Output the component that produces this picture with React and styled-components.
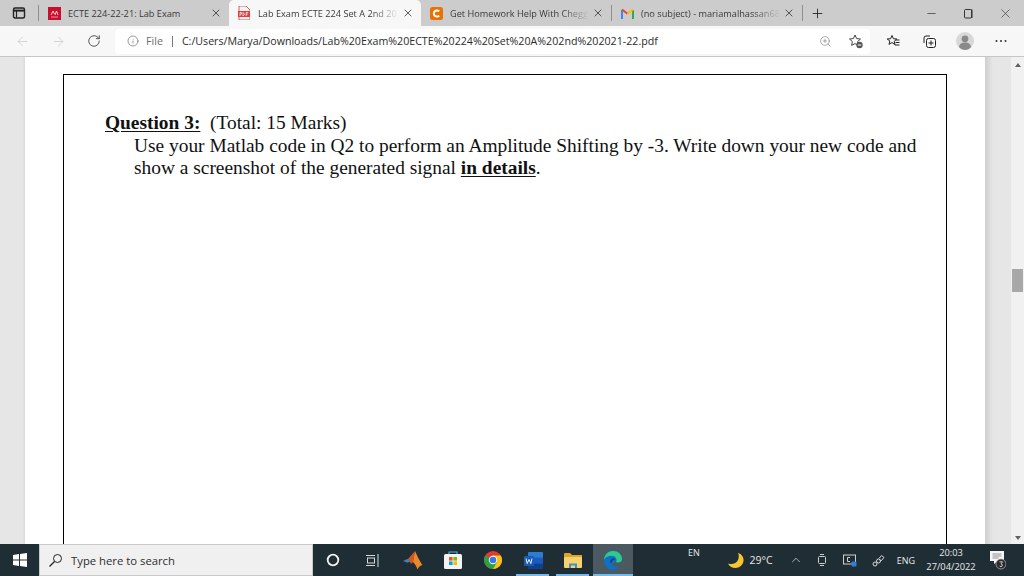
import styled, { createGlobalStyle } from "styled-components";
import { X, Plus, Minus, RotateCw, ArrowLeft, ArrowRight, Info, ZoomIn, ChevronUp } from "lucide-react";

const Global = createGlobalStyle`
  html, body { margin: 0; padding: 0; overflow: hidden; background: #e6e6e6; }
  * { box-sizing: border-box; }
`;

const Screen = styled.div`
  width: 1024px;
  height: 576px;
  display: flex;
  flex-direction: column;
  overflow: hidden;
  font-family: "Open Sans", "Noto Sans", sans-serif;
`;

const TabStrip = styled.div`
  height: 26px;
  background: #cccccc;
  display: flex;
  align-items: stretch;
  flex: none;
`;

const WindowMenu = styled.div`
  width: 38px;
  display: flex;
  align-items: center;
  justify-content: center;
`;

const TabDivider = styled.div`
  width: 1px;
  flex: none;
  margin: 5px 0;
  background: #8f8f8f;
`;

const Tab = styled.div`
  width: ${({ $w }) => $w}px;
  display: flex;
  align-items: center;
  padding: 0 4px 0 8px;
  background: ${({ $active }) => ($active ? "#f7f7f7" : "transparent")};
  border-radius: ${({ $active }) => ($active ? "5px 5px 0 0" : "0")};
`;

const TabIcon = styled.div`
  width: 14px;
  height: 14px;
  flex: none;
  display: flex;
  align-items: center;
  justify-content: center;
`;

const TabTitle = styled.div`
  flex: 1;
  min-width: 0;
  margin-left: 7px;
  font-size: 9.2px;
  color: #3a3a3a;
  white-space: nowrap;
  mask-image: ${({ $fade }) => ($fade ? "linear-gradient(90deg, #000 80%, transparent 100%)" : "none")};
`;

const TabClose = styled.div`
  width: 18px;
  flex: none;
  display: flex;
  justify-content: center;
  color: #333;
`;

const NewTab = styled.div`
  width: 30px;
  border-left: 1px solid #8f8f8f;
  margin: 5px 0;
  display: flex;
  align-items: center;
  justify-content: center;
  color: #222;
`;

const WindowControls = styled.div`
  margin-left: auto;
  display: flex;
  color: #333;
`;

const WindowButton = styled.div`
  width: 37px;
  display: flex;
  align-items: center;
  justify-content: center;
`;

const Toolbar = styled.div`
  height: 31px;
  flex: none;
  background: #f7f7f7;
  border-bottom: 1px solid #c6c6c6;
  display: flex;
  align-items: center;
`;

const NavButton = styled.div`
  width: 36px;
  display: flex;
  justify-content: center;
  color: ${({ $off }) => ($off ? "#c9c9c9" : "#333")};
`;

const NavGroup = styled.div`
  display: flex;
  width: 115px;
  padding-left: 4px;
`;

const Address = styled.div`
  width: 755px;
  height: 25px;
  background: #fff;
  border-radius: 4px;
  display: flex;
  align-items: center;
  padding-left: 12px;
  font-size: 10.67px;
  color: #2b2b2b;
`;

const Scheme = styled.span`
  color: #6d6d6d;
  margin-left: 7px;
`;

const AddressBar = styled.span`
  width: 1px;
  height: 11px;
  background: #777;
  margin: 0 9px;
`;

const AddressEnd = styled.div`
  margin-left: auto;
  display: flex;
  align-items: center;
  gap: 16px;
  padding-right: 6px;
  color: #666;
`;

const ToolGroup = styled.div`
  flex: 1;
  display: flex;
  padding-left: 5px;
`;

const ToolButton = styled.div`
  width: 36px;
  display: flex;
  justify-content: center;
  align-items: center;
  height: 24px;
`;

const Viewer = styled.div`
  flex: 1;
  min-height: 0;
  display: flex;
  background: #e6e6e6;
`;

const Gutter = styled.div`
  width: ${({ $w }) => $w}px;
  flex: none;
  background: ${({ $left }) =>
    $left
      ? "linear-gradient(90deg, #e6e6e6 88%, #dcdcdc 100%)"
      : "linear-gradient(90deg, #cfcfcf 0, #dcdcdc 18%, #e6e6e6 30%)"};
`;

const Sheet = styled.div`
  width: 960px;
  flex: none;
  background: #fff;
  padding: 17px 38px 0;
  overflow: hidden;
`;

const Frame = styled.div`
  width: 884px;
  height: 600px;
  border: 1px solid #000;
  padding-top: 37px;
  padding-left: 41px;
  font-family: "Liberation Serif", "Times New Roman", serif;
  font-size: 19.4px;
  line-height: 22.5px;
  color: #111;
`;

const Heading = styled.div`
  white-space: pre;
`;

const HeadingLabel = styled.strong`
  font-weight: 700;
  text-decoration: underline;
  text-underline-offset: 2px;
`;

const Body = styled.div`
  padding-left: 29px;
  white-space: nowrap;
`;

const Stress = styled.strong`
  font-weight: 700;
  text-decoration: underline;
  text-underline-offset: 2px;
`;

const Scrollbar = styled.div`
  width: 13px;
  flex: none;
  background: #f1f1f1;
  display: flex;
  flex-direction: column;
  align-items: center;
  justify-content: space-between;
  padding: 6px 0 4px;
`;

const ScrollArrow = styled.div`
  width: 0;
  height: 0;
  border-left: 3.5px solid transparent;
  border-right: 3.5px solid transparent;
  border-bottom: ${({ $down }) => ($down ? "0" : "4px solid #606060")};
  border-top: ${({ $down }) => ($down ? "4px solid #606060" : "0")};
`;

const ScrollThumb = styled.div`
  width: 11px;
  height: 23px;
  background: #a8a8a8;
  margin-bottom: 42px;
`;

const Taskbar = styled.div`
  height: 32px;
  flex: none;
  background: #1f2e35;
  display: flex;
  align-items: stretch;
`;

const StartButton = styled.div`
  width: 39px;
  display: flex;
  align-items: center;
  justify-content: center;
`;

const SearchBox = styled.div`
  width: 274px;
  background: #f0f0f0;
  border: 1px solid #c9c9c9;
  display: flex;
  align-items: center;
  padding-left: 8px;
  gap: 8px;
  font-size: 11.3px;
  color: #2e2e2e;
`;

const TaskSlot = styled.div`
  position: relative;
  width: 40px;
  display: flex;
  align-items: center;
  justify-content: center;
  background: ${({ $focus }) => ($focus ? "#4a5a60" : "transparent")};

  &::after {
    content: "";
    display: ${({ $open }) => ($open ? "block" : "none")};
    position: absolute;
    bottom: 0;
    height: 2px;
    left: ${({ $focus }) => ($focus ? "0" : "3px")};
    right: ${({ $focus }) => ($focus ? "0" : "4px")};
    background: #76b9ed;
  }
`;

const Tray = styled.div`
  margin-left: auto;
  display: flex;
  align-items: center;
  color: #e8e8e8;
`;

const TraySlot = styled.div`
  width: ${({ $w }) => $w}px;
  margin-left: ${({ $ml }) => $ml || 0}px;
  display: flex;
  align-items: center;
  justify-content: center;
  font-size: ${({ $size }) => $size || 10}px;
  white-space: nowrap;
`;

const LangHint = styled(TraySlot)`
  align-self: flex-start;
  margin-top: 2px;
  font-size: 9px;
`;

const Clock = styled.div`
  width: 54px;
  margin-left: 7px;
  display: flex;
  flex-direction: column;
  align-items: center;
  font-size: 9.3px;
  line-height: 14.5px;
  color: #e8e8e8;
`;

const Notify = styled.div`
  width: 46px;
  display: flex;
  justify-content: flex-start;
  padding-left: 12px;
`;

const WindowMenuIcon = () => (
  <svg width="14" height="14" viewBox="0 0 14 14" fill="none">
    <rect x="1.500" y="2" width="11" height="10" rx="1.500" stroke="#222" strokeWidth="1.400" />
    <path d="M1.500 4.600h11" stroke="#222" strokeWidth="2" />
    <path d="M4.500 4.600v7" stroke="#222" strokeWidth="1.200" />
  </svg>
);

const AcademicIcon = () => (
  <svg width="13" height="13" viewBox="0 0 13 13">
    <rect width="13" height="13" fill="#c8102e" />
    <path d="M3 8l2-4 1.500 3M7 8l1.500-4L10 8" stroke="#fff" strokeWidth=".8" fill="none" />
    <path d="M3 10h7" stroke="#f3b6bf" strokeWidth=".8" />
  </svg>
);

const PdfIcon = () => (
  <svg width="12" height="14" viewBox="0 0 12 14">
    <path d="M1 0h7l4 4v10H1z" fill="#f4f4f4" stroke="#d9383a" strokeWidth=".8" />
    <rect x="0" y="5" width="12" height="6" fill="#e2403f" />
    <path d="M2 10V6.500h1.400v1.600H2M5 10V6.500l1.600 1.700L5 10M8.200 10V6.500h2M8.200 8h1.600" stroke="#fff" strokeWidth=".7" fill="none" />
  </svg>
);

const CheggIcon = () => (
  <svg width="13" height="13" viewBox="0 0 13 13" fill="none">
    <rect width="13" height="13" rx="2.500" fill="#eb7100" />
    <path d="M9.200 4.400a3.100 3.100 0 1 0 0 4.200" stroke="#fff" strokeWidth="2" />
  </svg>
);

const GmailIcon = () => (
  <svg width="13" height="11" viewBox="0 0 13 11" fill="none">
    <path d="M1 11V2" stroke="#4285f4" strokeWidth="2" />
    <path d="M12 11V2" stroke="#34a853" strokeWidth="2" />
    <path d="M1 1.500l5.500 4.300" stroke="#ea4335" strokeWidth="2" />
    <path d="M12 1.500L6.500 5.800" stroke="#fbbc04" strokeWidth="2" />
  </svg>
);

const RestoreIcon = () => (
  <svg width="11" height="11" viewBox="0 0 11 11" fill="none">
    <rect x="1.500" y="1.500" width="7" height="8.500" rx="1" stroke="#333" />
    <path d="M8 1.500h1.500V10H8z" fill="#333" />
  </svg>
);

const FavAddIcon = () => (
  <svg width="16" height="16" viewBox="0 0 16 16" fill="none">
    <path d="M7 2l1.600 3.600 3.900.4-2.900 2.600.8 3.800L7 10.600l-3.400 1.800.8-3.800L1.500 6l3.900-.4z" stroke="#444" strokeWidth="1" />
    <circle cx="11.500" cy="12" r="3.200" fill="#555" />
    <path d="M9.800 12h3.400" stroke="#fff" />
  </svg>
);

const FavoritesIcon = () => (
  <svg width="14" height="14" viewBox="0 0 14 14" fill="none">
    <path d="M6 1.500l1.400 3.200 3.400.3-2.600 2.300.8 3.400L6 8.500l-3 1.900.8-3.400L1.200 5l3.400-.3z" stroke="#222" />
    <path d="M9.500 6h4M9.500 8.500h4M9 11h4.500" stroke="#222" />
  </svg>
);

const CollectionsIcon = () => (
  <svg width="15" height="15" viewBox="0 0 15 15" fill="none">
    <path d="M2 9V4a2 2 0 0 1 2-2h4" stroke="#222" />
    <rect x="4.500" y="4.500" width="9" height="9" rx="2" stroke="#222" />
    <path d="M9 6.500v5M6.500 9h5" stroke="#222" />
  </svg>
);

const ProfileIcon = () => (
  <svg width="18" height="18" viewBox="0 0 18 18">
    <circle cx="9" cy="9" r="9" fill="#d8d8d8" />
    <circle cx="9" cy="6.800" r="3.400" fill="#8a8a8a" />
    <path d="M3 15c.5-3.500 3-4.500 6-4.500s5.500 1 6 4.500c-1.500 1.800-3.500 3-6 3s-4.500-1.200-6-3z" fill="#8a8a8a" />
  </svg>
);

const MoreIcon = () => (
  <svg width="14" height="4" viewBox="0 0 14 4" fill="#333">
    <circle cx="2.500" cy="2" r="1" />
    <circle cx="7" cy="2" r="1" />
    <circle cx="11.500" cy="2" r="1" />
  </svg>
);

const WindowsLogo = () => (
  <svg width="14" height="14" viewBox="0 0 14 14" fill="#fff">
    <path d="M0 2l6-.9v5.500H0zM7 1l7-1v6.600H7zM0 7.400h6v5.500L0 12zM7 7.400h7V14l-7-1z" />
  </svg>
);

const SearchIcon = () => (
  <svg width="15" height="15" viewBox="0 0 15 15" fill="none">
    <circle cx="9.500" cy="5.500" r="4" stroke="#222" />
    <path d="M6.500 8.500L1.500 13.500" stroke="#222" strokeWidth="1.300" />
  </svg>
);

const CortanaIcon = () => (
  <svg width="14" height="14" viewBox="0 0 14 14" fill="none">
    <circle cx="7" cy="7" r="5.300" stroke="#f2f2f2" strokeWidth="1.800" />
  </svg>
);

const TaskViewIcon = () => (
  <svg width="14" height="13" viewBox="0 0 14 13" fill="none" stroke="#d8d8d8">
    <path d="M0 1.500h9M0 11.500h9" />
    <rect x="1.500" y="4" width="7" height="5" />
    <path d="M12 0v13" />
  </svg>
);

const MatlabIcon = () => (
  <svg width="20" height="19" viewBox="0 0 20 19">
    <path d="M0 10l5.500-2.500L8 10l-3.500 1.800z" fill="#3f7fb8" />
    <path d="M5.500 7.500L12 0l-2 11-2 2z" fill="#d9541e" />
    <path d="M12 0c2 4 5 11 7.500 14-2 .5-4 2-5 4.500C13 14 11 12 10 11z" fill="#e98a2a" />
  </svg>
);

const StoreIcon = () => (
  <svg width="20" height="20" viewBox="0 0 20 20" fill="none">
    <path d="M6 5V2h8v3" stroke="#3ab4e8" strokeWidth="1.200" />
    <rect x="1" y="4" width="18" height="15" rx="1.500" fill="#f3f3f3" />
    <rect x="6" y="7" width="3.600" height="3.600" fill="#f25022" />
    <rect x="10.400" y="7" width="3.600" height="3.600" fill="#7fba00" />
    <rect x="6" y="11.400" width="3.600" height="3.600" fill="#00a4ef" />
    <rect x="10.400" y="11.400" width="3.600" height="3.600" fill="#ffb900" />
  </svg>
);

const ChromeIcon = () => (
  <svg width="18" height="18" viewBox="0 0 18 18">
    <circle cx="9" cy="9" r="9" fill="#e33b2e" />
    <path d="M9 18a9 9 0 0 0 7.800-13.500H9z" fill="#fbc116" />
    <path d="M1.200 4.500A9 9 0 0 0 9 18l3.900-6.750L9 9z" fill="#2f9e44" />
    <circle cx="9" cy="9" r="4.200" fill="#fff" />
    <circle cx="9" cy="9" r="3.300" fill="#3b78e7" />
  </svg>
);

const WordIcon = () => (
  <svg width="19" height="17" viewBox="0 0 19 17">
    <rect x="4" y="0" width="15" height="17" rx="1" fill="#2b7cd3" />
    <rect x="4" y="5.600" width="15" height="5.800" fill="#185abd" />
    <rect x="4" y="11.400" width="15" height="5.600" fill="#103f91" />
    <rect x="0" y="4" width="10" height="10" rx="1" fill="#1a5bb8" />
    <path d="M2 6.500l1.200 5 1.800-4 1.800 4L8 6.500" stroke="#fff" strokeWidth=".9" fill="none" />
  </svg>
);

const FolderIcon = () => (
  <svg width="18" height="15" viewBox="0 0 18 15">
    <path d="M0 1a1 1 0 0 1 1-1h5l2 2h10v3H0z" fill="#e0a526" />
    <rect y="4" width="18" height="11" rx="1" fill="#f7d26a" />
    <path d="M5 15v-4.500h8V15h-2v-2.500H7V15z" fill="#3b8fd6" />
  </svg>
);

const EdgeIcon = () => (
  <svg width="20" height="20" viewBox="0 0 20 20" fill="none">
    <path d="M1 10a9 9 0 0 1 18-1c0 2.500-2 3.500-4 3.500H8c0 3 4 5 8 3.500-2 2.500-4 4-6.500 4C5 20 1 15 1 10z" fill="#0f6fc6" />
    <path d="M1 10C1.500 4 5.500 1 10 1c5 0 9 3.500 9 8 0 2.500-2 3.500-4 3.500-1 0-1.800-.2-2-.5 1-1 1-4-1.500-5.500C8 5 3 6 1 10z" fill="#2fc98a" />
    <path d="M8 12.500c0-2 1.500-3.500 3.500-3.500" stroke="#0a3d7a" strokeWidth="1.500" />
  </svg>
);

const MoonIcon = () => (
  <svg width="16" height="15" viewBox="0 0 16 15">
    <path d="M10 0c3.500 1 6 4 5.500 8-.6 4-4 7-8 7C4 15 1 13 0 10.500c4 1.500 8.500 0 10-3.500 1-2.500 1-5 0-7z" fill="#f7c62f" />
  </svg>
);

const MeetIcon = () => (
  <svg width="10" height="12" viewBox="0 0 10 12" fill="none" stroke="#cfcfcf">
    <rect x="1.500" y="2.500" width="7" height="7" rx="1" />
    <path d="M3 .5h4M3 11.500h4" />
  </svg>
);

const ScreenIcon = () => (
  <svg width="14" height="13" viewBox="0 0 14 13" fill="none">
    <rect x=".5" y="1" width="12" height="9" stroke="#cfcfcf" />
    <path d="M7 3.500H4.500v4H7" stroke="#cfcfcf" />
    <rect x="8.500" y="7.500" width="5" height="5" rx="1" fill="#2f7fdc" />
  </svg>
);

const LinkIcon = () => (
  <svg width="13" height="13" viewBox="0 0 13 13" fill="none" stroke="#d8d8d8">
    <circle cx="3" cy="10" r="2" />
    <circle cx="6.500" cy="7" r="2" />
    <path d="M7 4.500L9.500 1.500l2.500 2-2.500 3-2-.5" />
  </svg>
);

const NotifyIcon = () => (
  <svg width="16" height="19" viewBox="0 0 16 19">
    <path d="M0 0h14v10H8L4 13v-3H0z" fill="#f5f5f5" />
    <path d="M2.500 3h9M2.500 5h9M2.500 7h6" stroke="#777" strokeWidth=".8" />
    <circle cx="11" cy="13" r="5" fill="#2b2b2b" stroke="#aaa" strokeWidth=".8" />
    <path d="M9.500 10.800h3l-1.500 2c1.800 0 1.800 2.800 0 2.800-.8 0-1.300-.3-1.500-.8" stroke="#eee" strokeWidth=".8" fill="none" />
  </svg>
);

const dock = [
  { icon: <CortanaIcon /> },
  { icon: <TaskViewIcon /> },
  { icon: <MatlabIcon /> },
  { icon: <StoreIcon /> },
  { icon: <ChromeIcon /> },
  { icon: <WordIcon />, open: true },
  { icon: <FolderIcon />, open: true },
  { icon: <EdgeIcon />, open: true, focus: true },
];

const App = () => {
  return (
    <Screen>
      <Global />
      <TabStrip>
        <WindowMenu>
          <WindowMenuIcon />
        </WindowMenu>
        <TabDivider />
        <Tab $w={190}>
          <TabIcon><AcademicIcon /></TabIcon>
          <TabTitle>ECTE 224-22-21: Lab Exam</TabTitle>
          <TabClose><X size={12} strokeWidth={1.6} /></TabClose>
        </Tab>
        <Tab $w={192} $active>
          <TabIcon><PdfIcon /></TabIcon>
          <TabTitle $fade>Lab Exam ECTE 224 Set A 2nd 20</TabTitle>
          <TabClose><X size={12} strokeWidth={1.6} /></TabClose>
        </Tab>
        <Tab $w={190}>
          <TabIcon><CheggIcon /></TabIcon>
          <TabTitle $fade>Get Homework Help With Chegg</TabTitle>
          <TabClose><X size={12} strokeWidth={1.6} /></TabClose>
        </Tab>
        <TabDivider />
        <Tab $w={190}>
          <TabIcon><GmailIcon /></TabIcon>
          <TabTitle $fade>(no subject) - mariamalhassan68</TabTitle>
          <TabClose><X size={12} strokeWidth={1.6} /></TabClose>
        </Tab>
        <NewTab>
          <Plus size={15} strokeWidth={1.4} />
        </NewTab>
        <WindowControls>
          <WindowButton>
            <Minus size={13} strokeWidth={1.3} />
          </WindowButton>
          <WindowButton>
            <RestoreIcon />
          </WindowButton>
          <WindowButton>
            <X size={15} strokeWidth={1} />
          </WindowButton>
        </WindowControls>
      </TabStrip>

      <Toolbar>
        <NavGroup>
          <NavButton $off>
            <ArrowLeft size={15} strokeWidth={1.2} />
          </NavButton>
          <NavButton $off>
            <ArrowRight size={15} strokeWidth={1.2} />
          </NavButton>
          <NavButton>
            <RotateCw size={14} strokeWidth={1.4} />
          </NavButton>
        </NavGroup>
        <Address>
          <Info size={12} strokeWidth={1.2} color="#555" />
          <Scheme>File</Scheme>
          <AddressBar />
          C:/Users/Marya/Downloads/Lab%20Exam%20ECTE%20224%20Set%20A%202nd%202021-22.pdf
          <AddressEnd>
            <ZoomIn size={13} strokeWidth={1} />
            <FavAddIcon />
          </AddressEnd>
        </Address>
        <ToolGroup>
          <ToolButton>
            <FavoritesIcon />
          </ToolButton>
          <ToolButton>
            <CollectionsIcon />
          </ToolButton>
          <ToolButton>
            <ProfileIcon />
          </ToolButton>
          <ToolButton>
            <MoreIcon />
          </ToolButton>
        </ToolGroup>
      </Toolbar>

      <Viewer>
        <Gutter $w={25} $left />
        <Sheet>
          <Frame>
            <Heading>
              <HeadingLabel>Question 3:</HeadingLabel>{"  "}(Total: 15 Marks)
            </Heading>
            <Body>
              Use your Matlab code in Q2 to perform an Amplitude Shifting by -3. Write down your new code and
              <br />
              show a screenshot of the generated signal <Stress>in details</Stress>.
            </Body>
          </Frame>
        </Sheet>
        <Gutter $w={26} />
        <Scrollbar>
          <ScrollArrow />
          <ScrollThumb />
          <ScrollArrow $down />
        </Scrollbar>
      </Viewer>

      <Taskbar>
        <StartButton>
          <WindowsLogo />
        </StartButton>
        <SearchBox>
          <SearchIcon />
          Type here to search
        </SearchBox>
        {dock.map((item, i) => (
          <TaskSlot key={i} $open={item.open} $focus={item.focus}>
            {item.icon}
          </TaskSlot>
        ))}
        <Tray>
          <LangHint $w={26}>EN</LangHint>
          <TraySlot $w={22} $ml={18}>
            <MoonIcon />
          </TraySlot>
          <TraySlot $w={28} $size={10.5}>
            29°C
          </TraySlot>
          <TraySlot $w={20} $ml={11}>
            <ChevronUp size={14} strokeWidth={1.2} />
          </TraySlot>
          <TraySlot $w={14} $ml={9}>
            <MeetIcon />
          </TraySlot>
          <TraySlot $w={16} $ml={13}>
            <ScreenIcon />
          </TraySlot>
          <TraySlot $w={14} $ml={13}>
            <LinkIcon />
          </TraySlot>
          <TraySlot $w={22} $ml={10} $size={9}>
            ENG
          </TraySlot>
          <Clock>
            <span>20:03</span>
            <span>27/04/2022</span>
          </Clock>
          <Notify>
            <NotifyIcon />
          </Notify>
        </Tray>
      </Taskbar>
    </Screen>
  );
};

export default App;
